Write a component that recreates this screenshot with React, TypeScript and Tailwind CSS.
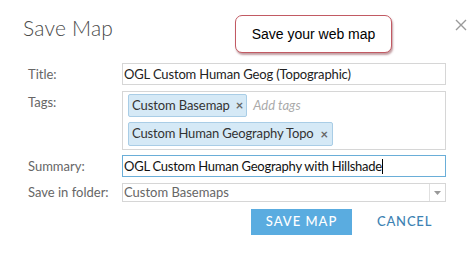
import React from "react";

export default function App() {
  const font = { fontFamily: "Lato, 'Open Sans', sans-serif" };
  return (
    <div className="relative w-[474px] h-[257px] bg-white overflow-hidden" style={font}>
      <div className="flex items-start justify-between pl-[23px] pr-[7px] pt-[13px] h-[63px]">
        <div className="text-[21px] leading-[30px] text-[#4a4a4a] font-light tracking-[0.2px]">Save Map</div>
        <svg width="12" height="12" viewBox="0 0 12 12" className="mt-[6px] mr-[0px]">
          <path d="M1 1 L11 11 M11 1 L1 11" stroke="#9a9a9a" strokeWidth="1.4" fill="none" />
        </svg>
      </div>

      <div className="absolute left-[235px] top-[15px] w-[157px] h-[38px] rounded-[7px] border border-[#c25a63] bg-white shadow-[1px_2px_2px_rgba(120,40,50,0.45)] flex items-center justify-center">
        <span className="text-[14px] text-black" style={{ fontFamily: "'Liberation Sans', Arial, sans-serif" }}>Save your web map</span>
      </div>

      <div className="grid grid-cols-[94px_324px] pl-[28px] gap-y-[6px] text-[13px]">
        <div className="text-[#666] leading-[22px]">Title:</div>
        <div className="h-[22px] border border-[#d6d6d6] px-[1px] leading-[20px] text-[#222] text-[13px] tracking-[-0.15px]">OGL Custom Human Geog (Topographic)</div>

        <div className="text-[#666] leading-[22px]">Tags:</div>
        <div className="h-[59px] border border-[#d6d6d6] pl-[5px] pt-[2px] flex flex-wrap gap-x-[6px] gap-y-[5px] content-start">
          <div className="h-[23px] border border-[#a9cde6] bg-[#d5e9f6] rounded-[2px] pl-[3px] pr-[3px] flex items-center gap-[6px] text-[#333] text-[13px] tracking-[-0.1px]">
            <span>Custom Basemap</span>
            <span className="text-[#666] text-[13px] font-bold leading-none">×</span>
          </div>
          <div className="h-[23px] flex items-center text-[#aaa] italic text-[13px]">Add tags</div>
          <div className="h-[24px] border border-[#a9cde6] bg-[#d5e9f6] rounded-[2px] pl-[3px] pr-[4px] flex items-center gap-[7px] text-[#333] text-[13px] tracking-[-0.15px]">
            <span>Custom Human Geography Topo</span>
            <span className="text-[#666] text-[13px] font-bold leading-none">×</span>
          </div>
        </div>

        <div className="text-[#666] leading-[22px] -mt-[1px]">Summary:</div>
        <div className="h-[22px] -mt-[1px] border border-[#6aaed8] px-[1px] leading-[20px] text-[#111] text-[13px] tracking-[-0.25px] flex items-center">
          <span>OGL Custom Human Geography with Hillshade</span>
          <span className="inline-block w-[1px] h-[15px] bg-black" />
        </div>

        <div className="text-[#666] leading-[19px]">Save in folder:</div>
        <div className="h-[19px] border border-[#d6d6d6] flex">
          <div className="flex-1 px-[1px] leading-[17px] text-[#666] text-[13px]">Custom Basemaps</div>
          <div className="w-[16px] border-l border-[#e0e0e0] flex items-center justify-center">
            <svg width="7" height="4" viewBox="0 0 7 4"><path d="M0 0 L7 0 L3.5 4 Z" fill="#999" /></svg>
          </div>
        </div>
      </div>

      <div className="flex pl-[251px] pt-[7px] items-center gap-[25px]">
        <div className="w-[101px] h-[26px] bg-[#5aace0] flex items-center justify-center text-white text-[13px] tracking-[1px] font-medium">SAVE MAP</div>
        <div className="text-[#3d82b3] text-[13px] tracking-[0.8px] font-medium">CANCEL</div>
      </div>
    </div>
  );
}
